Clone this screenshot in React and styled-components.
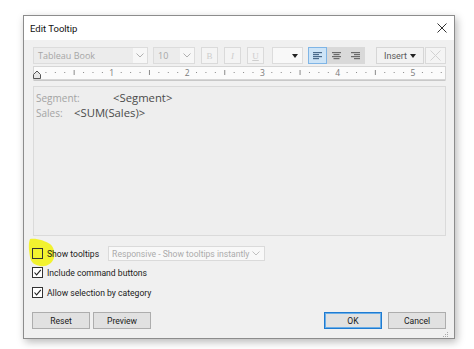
import React from "react";
import styled, { createGlobalStyle } from "styled-components";

const GlobalStyle = createGlobalStyle`
  body {
    margin: 0;
    background: #ffffff;
    font-family: Roboto, "Open Sans", sans-serif;
  }
`;

const Page = styled.div`
  width: 474px;
  height: 349px;
  padding: 15px 0 0 23px;
  box-sizing: border-box;
  position: relative;
`;

const Window = styled.div`
  width: 432px;
  height: 324px;
  box-sizing: border-box;
  border: 1px solid #8c8c8c;
  background: #f0f0f0;
  box-shadow: 2px 3px 8px rgba(0, 0, 0, 0.28);
  display: flex;
  flex-direction: column;
`;

const TitleBar = styled.div`
  height: 24px;
  background: #ffffff;
  display: flex;
  align-items: center;
  justify-content: space-between;
  padding: 0 7px 0 6px;
`;

const Title = styled.span`
  font-size: 9.5px;
  color: #111;
`;

const CloseX = styled.svg`
  width: 10px;
  height: 10px;
`;

const Body = styled.div`
  flex: 1;
  padding: 7px 8px 0 9px;
  display: flex;
  flex-direction: column;
`;

const Toolbar = styled.div`
  display: flex;
  align-items: center;
  height: 17px;
`;

const Combo = styled.div`
  width: ${(p) => p.$w}px;
  height: 17px;
  box-sizing: border-box;
  margin-right: ${(p) => p.$mr || 0}px;
  border: 1px solid #dcdcdc;
  background: ${(p) => (p.$light ? "#f8f8f8" : "#ececec")};
  display: flex;
  align-items: center;
  font-family: "Open Sans", sans-serif;
  font-size: 9px;
  color: #a6a6a6;
`;

const ComboText = styled.span`
  flex: 1;
  padding-left: 4px;
  align-self: stretch;
  display: flex;
  align-items: center;
`;

const ComboArrow = styled.span`
  width: 14px;
  display: flex;
  align-items: center;
  justify-content: center;
  align-self: stretch;
  background: #f7f7f7;
`;

const SquareBtn = styled.div`
  width: ${(p) => p.$w || 17}px;
  height: 17px;
  box-sizing: border-box;
  margin-right: ${(p) => p.$mr || 0}px;
  border: 1px solid #dadada;
  background: #f4f4f4;
  color: #cdcdcd;
  font-size: 9px;
  font-style: ${(p) => (p.$italic ? "italic" : "normal")};
  text-decoration: ${(p) => (p.$under ? "underline" : "none")};
  font-family: "Liberation Serif", serif;
  display: flex;
  align-items: center;
  justify-content: center;
`;

const AlignGroup = styled.div`
  display: flex;
  height: 17px;
  background: #d9d9d9;
  margin-right: 11px;
`;

const AlignBtn = styled.div`
  width: 19px;
  height: 17px;
  box-sizing: border-box;
  border: 1px solid ${(p) => (p.$on ? "#7fb5e6" : "transparent")};
  background: ${(p) => (p.$on ? "#cde4f7" : "transparent")};
  display: flex;
  align-items: center;
  justify-content: center;
`;

const InsertBtn = styled.div`
  width: 48px;
  height: 17px;
  box-sizing: border-box;
  margin-right: 1px;
  border: 1px solid #d6d6d6;
  background: #f2f2f2;
  font-size: 9px;
  color: #5a5a5a;
  display: flex;
  align-items: center;
  justify-content: center;
  gap: 3px;
`;

const Ruler = styled.svg`
  display: block;
  margin-top: 2px;
  width: 413px;
  height: 15px;
`;

const Editor = styled.div`
  margin-top: 5px;
  height: 150px;
  box-sizing: border-box;
  border: 1px solid #dadada;
  background: #eeeeee;
  padding: 4px 2px;
  font-family: "Open Sans", "Noto Sans", sans-serif;
  line-height: 14.5px;
`;

const Line = styled.div`
  display: flex;
  align-items: baseline;
  white-space: pre;
`;

const Label = styled.span`
  color: #a4a4a4;
  font-size: 10px;
  width: ${(p) => p.$w}px;
`;

const Field = styled.span`
  color: #4a4a4a;
  font-size: 11.3px;
`;

const Options = styled.div`
  margin-top: 10px;
  display: flex;
  flex-direction: column;
  position: relative;
`;

const OptionRow = styled.div`
  display: flex;
  align-items: center;
  height: ${(p) => p.$h}px;
  font-size: 8.6px;
  color: #1a1a1a;
  position: relative;
  z-index: 1;
  white-space: nowrap;
`;

const Box = styled.span`
  width: 11px;
  height: 11px;
  box-sizing: border-box;
  margin-left: -1px;
  margin-right: 4px;
  border: 1px solid #333333;
  background: ${(p) => (p.$clear ? "transparent" : "#ffffff")};
  display: flex;
  align-items: center;
  justify-content: center;
`;

const Select = styled.div`
  margin-left: 9px;
  width: 157px;
  height: 15px;
  box-sizing: border-box;
  border: 1px solid #dadada;
  background: #f8f8f8;
  color: #ababab;
  display: flex;
  align-items: center;
  justify-content: space-between;
  padding: 0 4px 0 3px;
  overflow: hidden;
`;

const Highlight = styled.svg`
  position: absolute;
  left: -6px;
  top: -8px;
  width: 30px;
  height: 32px;
  z-index: 0;
`;

const Footer = styled.div`
  margin-top: 11px;
  display: flex;
  align-items: center;
`;

const Button = styled.div`
  width: 58px;
  height: 17px;
  box-sizing: border-box;
  margin-left: ${(p) => p.$ml || 0}px;
  border: 1px solid ${(p) => (p.$primary ? "#1f7bd1" : "#adadad")};
  box-shadow: ${(p) => (p.$primary ? "inset 0 0 0 1px #6aaee8" : "none")};
  background: #e1e1e1;
  font-size: 8.6px;
  color: #1a1a1a;
  display: flex;
  align-items: center;
  justify-content: center;
`;

const Spacer = styled.div`
  flex: 1;
`;

const Grip = styled.svg`
  position: absolute;
  right: 25px;
  bottom: 11px;
  width: 6px;
  height: 6px;
`;

const Chevron = ({ color = "#b0b0b0" }) => (
  <svg width="8" height="5" viewBox="0 0 8 5">
    <path d="M0.5 0.5 L4 4 L7.5 0.5" fill="none" stroke={color} strokeWidth="1" />
  </svg>
);

const Caret = () => (
  <svg width="6" height="4" viewBox="0 0 6 4">
    <path d="M0 0 H6 L3 4 Z" fill="#222" />
  </svg>
);

const AlignIcon = ({ kind }) => {
  const rows = [9, 6, 9, 6];
  return (
    <svg width="9" height="9" viewBox="0 0 9 9">
      {rows.map((w, i) => {
        const x = kind === "left" ? 0 : kind === "center" ? (9 - w) / 2 : 9 - w;
        return <rect key={i} x={x} y={i * 2 + 1} width={w} height="1.2" fill={kind === "left" ? "#4a6a8a" : "#6a6a6a"} />;
      })}
    </svg>
  );
};

const Check = () => (
  <svg width="9" height="9" viewBox="0 0 9 9">
    <path d="M1.5 4.5 L3.6 6.8 L7.8 1.8" fill="none" stroke="#222" strokeWidth="1.1" />
  </svg>
);

const RulerDrawing = () => {
  const unit = 75.3;
  const zero = 3.5;
  const marks = [];
  for (let k = 1; k * (unit / 8) + zero < 411; k++) {
    const x = zero + (k * unit) / 8;
    if (k % 8 === 0) {
      marks.push(
        <text key={k} x={x} y="10" fontSize="8.5" fill="#7a7a7a" textAnchor="middle" fontFamily="Open Sans, sans-serif">
          {k / 8}
        </text>
      );
    } else if (k % 4 === 0) {
      marks.push(<rect key={k} x={x - 0.5} y="4" width="1" height="5" fill="#8a8a8a" />);
    } else {
      marks.push(<rect key={k} x={x - 0.5} y="6" width="1" height="1" fill="#8a8a8a" />);
    }
  }
  return (
    <Ruler viewBox="0 0 413 15">
      <rect x="0.5" y="0.5" width="412" height="13" fill="#fbfbfb" stroke="#d6d6d6" />
      {marks}
      <path d="M0.5 14.5 H412.5" stroke="#c8c8c8" />
      <path d="M0.5 12.5 L0.5 8.5 L4 5 L7.5 8.5 L7.5 12.5 Z" fill="#e6e6e6" stroke="#555" strokeWidth="1" />
    </Ruler>
  );
};

export default function App() {
  return (
    <>
      <GlobalStyle />
      <Page>
        <Window>
          <TitleBar>
            <Title>Edit Tooltip</Title>
            <CloseX viewBox="0 0 10 10">
              <path d="M0.5 0.5 L9.5 9.5 M9.5 0.5 L0.5 9.5" stroke="#333" strokeWidth="1" />
            </CloseX>
          </TitleBar>
          <Body>
            <Toolbar>
              <Combo $w={115} $mr={5}>
                <ComboText>Tableau Book</ComboText>
                <ComboArrow>
                  <Chevron />
                </ComboArrow>
              </Combo>
              <Combo $w={42} $mr={6}>
                <ComboText>10</ComboText>
                <ComboArrow>
                  <Chevron />
                </ComboArrow>
              </Combo>
              <SquareBtn $mr={6}>B</SquareBtn>
              <SquareBtn $mr={6} $italic>
                I
              </SquareBtn>
              <SquareBtn $mr={8} $under>
                U
              </SquareBtn>
              <Combo $w={31} $mr={5} $light>
                <ComboText />
                <Caret />
                <span style={{ width: 4 }} />
              </Combo>
              <AlignGroup>
                <AlignBtn $on>
                  <AlignIcon kind="left" />
                </AlignBtn>
                <AlignBtn>
                  <AlignIcon kind="center" />
                </AlignBtn>
                <AlignBtn>
                  <AlignIcon kind="right" />
                </AlignBtn>
              </AlignGroup>
              <InsertBtn>
                Insert <Caret />
              </InsertBtn>
              <SquareBtn $w={21}>
                <svg width="11" height="11" viewBox="0 0 11 11">
                  <path d="M0.5 0.5 L10.5 10.5 M10.5 0.5 L0.5 10.5" stroke="#d2d2d2" strokeWidth="1" />
                </svg>
              </SquareBtn>
            </Toolbar>
            <RulerDrawing />
            <Editor>
              <Line>
                <Label $w={77}>Segment:</Label>
                <Field>{"<Segment>"}</Field>
              </Line>
              <Line>
                <Label $w={38}>Sales:</Label>
                <Field>{"<SUM(Sales)>"}</Field>
              </Line>
            </Editor>
            <Options>
              <Highlight viewBox="0 0 30 32">
                <path
                  d="M3 1 C10 0 18 3 23 6 C27 9 28 15 27 20 C25 26 19 29 13 28 C8 27 4 25 3 19 C2 13 1 6 3 1 Z"
                  fill="#f2f21e"
                  opacity="0.92"
                />
              </Highlight>
              <OptionRow $h={15}>
                <Box $clear />
                Show tooltips
                <Select>
                  <span>Responsive - Show tooltips instantly</span>
                  <Chevron color="#c0c0c0" />
                </Select>
              </OptionRow>
              <OptionRow $h={23}>
                <Box>
                  <Check />
                </Box>
                Include command buttons
              </OptionRow>
              <OptionRow $h={17}>
                <Box>
                  <Check />
                </Box>
                Allow selection by category
              </OptionRow>
            </Options>
            <Footer>
              <Button $ml={-1}>Reset</Button>
              <Button $ml={3}>Preview</Button>
              <Spacer />
              <Button $primary>OK</Button>
              <Button $ml={6}>Cancel</Button>
            </Footer>
          </Body>
        </Window>
        <Grip viewBox="0 0 6 6">
          <rect x="4" y="0" width="1" height="1" fill="#aaa" />
          <rect x="2" y="2" width="1" height="1" fill="#aaa" />
          <rect x="4" y="2" width="1" height="1" fill="#aaa" />
          <rect x="0" y="4" width="1" height="1" fill="#aaa" />
          <rect x="2" y="4" width="1" height="1" fill="#aaa" />
          <rect x="4" y="4" width="1" height="1" fill="#aaa" />
        </Grip>
      </Page>
    </>
  );
}
